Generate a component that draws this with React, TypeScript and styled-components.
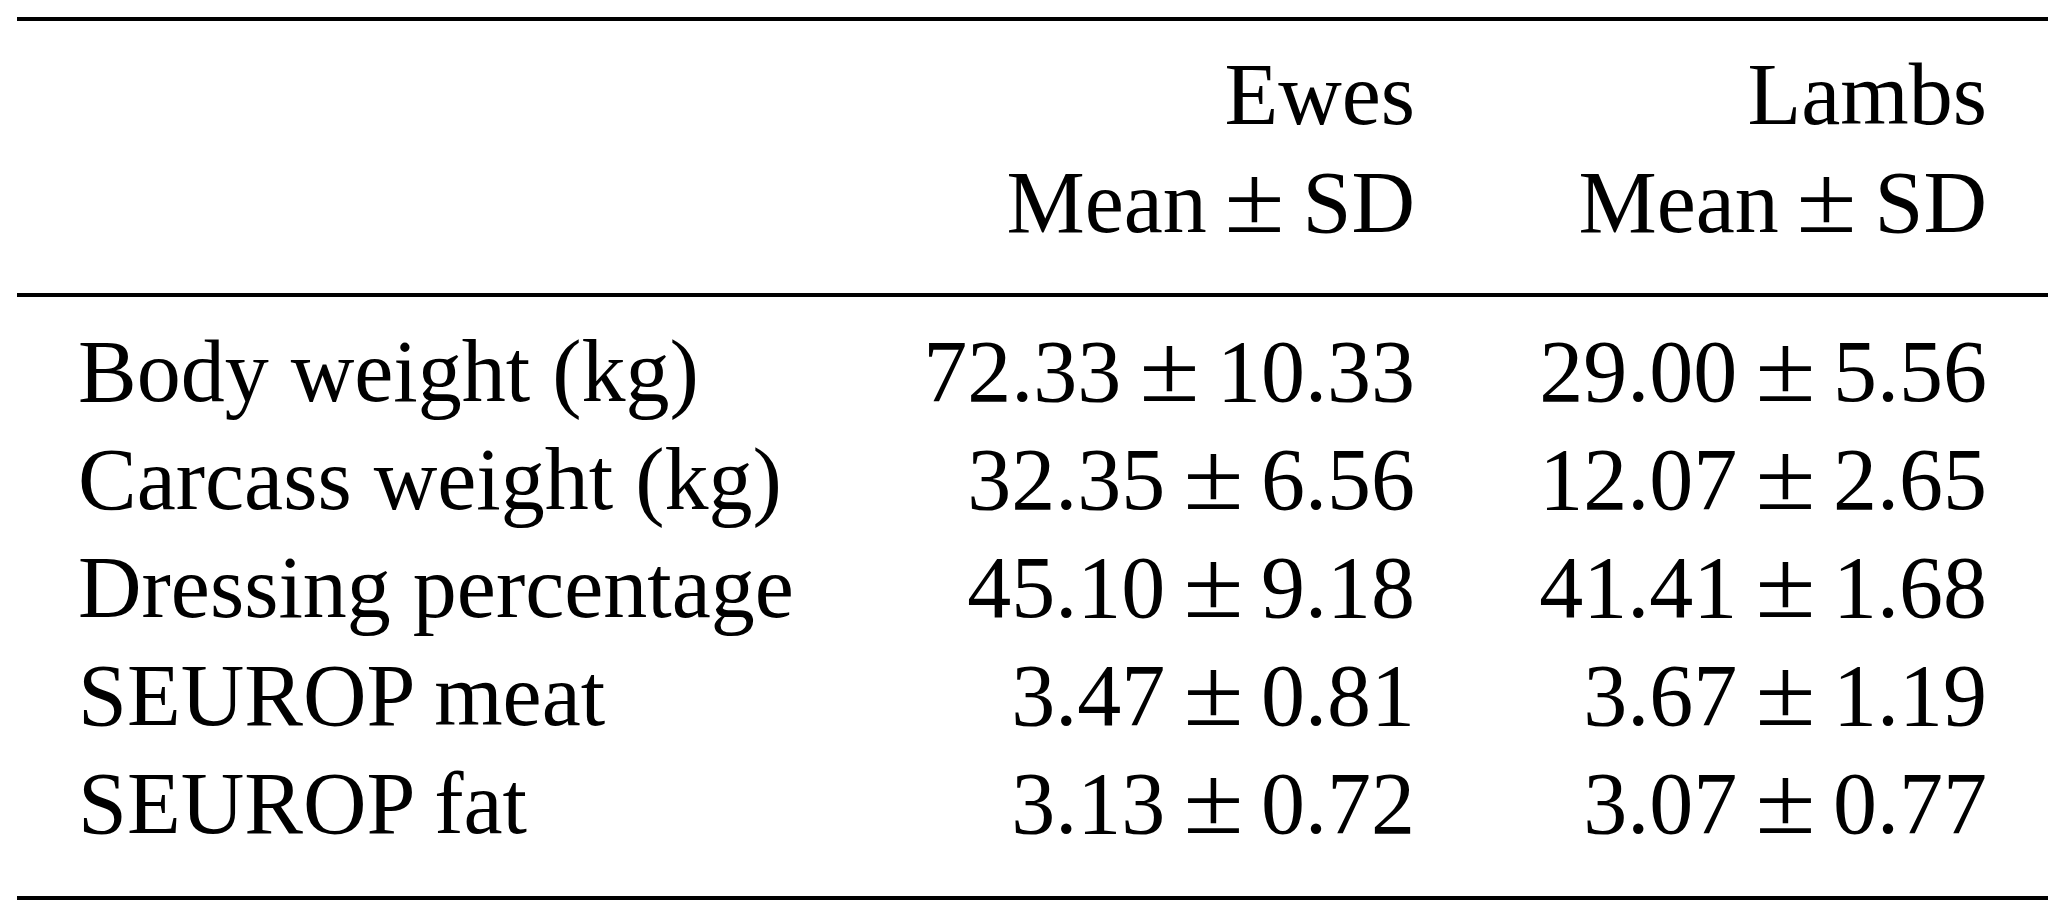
import styled, { createGlobalStyle } from 'styled-components';

const GlobalStyle = createGlobalStyle`
  html, body {
    margin: 0;
    padding: 0;
    background: #ffffff;
  }
`;

const Page = styled.div`
  padding: 17px 19px 0 17px;
  font-family: 'Liberation Serif', 'Times New Roman', serif;
  color: #000;
  font-size: 88px;
  line-height: 108px;
`;

const Table = styled.div`
  width: 2031px;
`;

const Rule = styled.div`
  height: 4px;
  background: #000;
`;

const Grid = styled.div<{ $padTop: number; $padBottom: number }>`
  display: grid;
  grid-template-columns: 1fr 563px 572px;
  padding: ${({ $padTop }) => $padTop}px 61px ${({ $padBottom }) => $padBottom}px 61px;
`;

const Label = styled.div`
  white-space: nowrap;
`;

const Value = styled.div`
  text-align: right;
  white-space: nowrap;
`;

// math-style plus-minus: a bit larger and wider than the text glyph
const Pm = styled.span`
  display: inline-block;
  font-size: 1.1em;
  line-height: 0;
  margin: 0 0.22em;
  transform: scaleX(1.13);
`;

type Row = { label: string; ewes: [string, string]; lambs: [string, string] };

const rows: Row[] = [
  { label: 'Body weight (kg)', ewes: ['72.33', '10.33'], lambs: ['29.00', '5.56'] },
  { label: 'Carcass weight (kg)', ewes: ['32.35', '6.56'], lambs: ['12.07', '2.65'] },
  { label: 'Dressing percentage', ewes: ['45.10', '9.18'], lambs: ['41.41', '1.68'] },
  { label: 'SEUROP meat', ewes: ['3.47', '0.81'], lambs: ['3.67', '1.19'] },
  { label: 'SEUROP fat', ewes: ['3.13', '0.72'], lambs: ['3.07', '0.77'] },
];

const MeanSd = ({ v }: { v: [string, string] }) => (
  <Value>
    {v[0]}
    <Pm>±</Pm>
    {v[1]}
  </Value>
);

export default function App() {
  return (
    <Page>
      <GlobalStyle />
      <Table>
        <Rule />
        <Grid $padTop={20} $padBottom={36}>
          <Label />
          <Value>Ewes</Value>
          <Value>Lambs</Value>
          <Label />
          <Value>
            Mean<Pm>±</Pm>SD
          </Value>
          <Value>
            Mean<Pm>±</Pm>SD
          </Value>
        </Grid>
        <Rule />
        <Grid $padTop={21} $padBottom={38}>
          {rows.map((r) => (
            <>
              <Label key={r.label}>{r.label}</Label>
              <MeanSd v={r.ewes} />
              <MeanSd v={r.lambs} />
            </>
          ))}
        </Grid>
        <Rule />
      </Table>
    </Page>
  );
}
